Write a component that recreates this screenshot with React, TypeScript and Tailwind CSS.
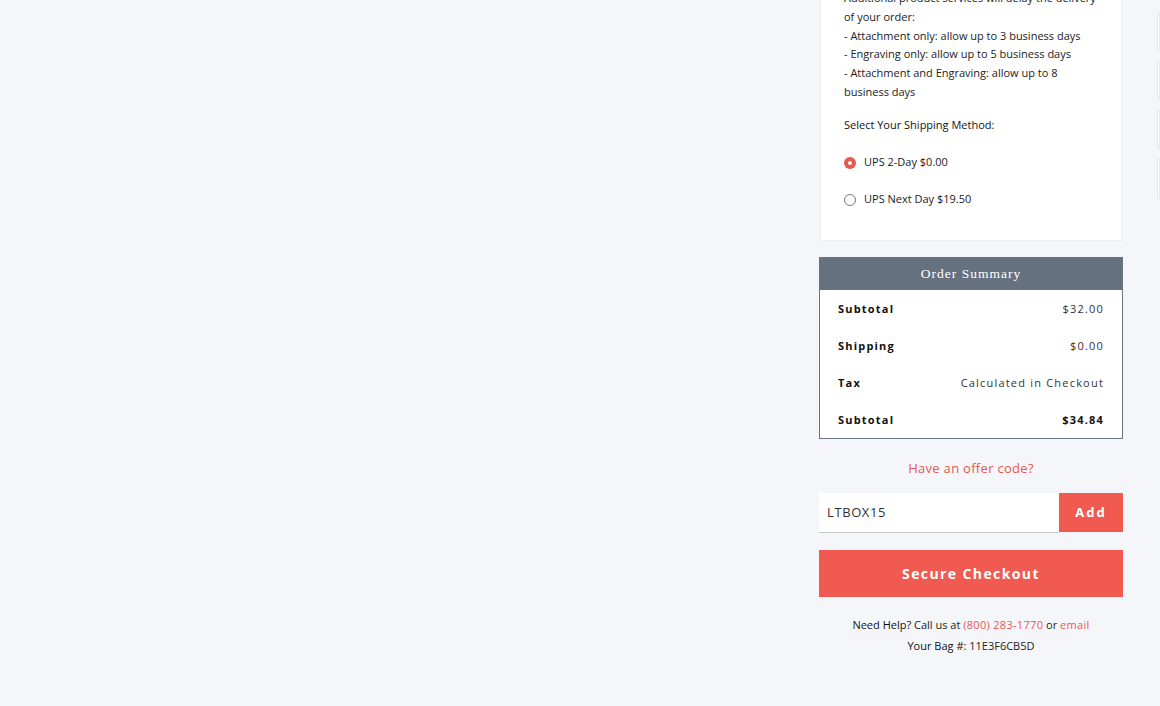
import React from "react";

const sans = { fontFamily: "'Open Sans', Lato, sans-serif" };

export default function App() {
  return (
    <div className="w-[1160px] h-[706px] overflow-hidden bg-[#f5f6fa] flex" style={sans}>
      <div className="w-[819px] shrink-0" />
      <div className="w-[304px] shrink-0 flex flex-col">
        <div className="mt-[-30px] ml-[1px] mr-[1px] bg-white border border-[#eceef3] pl-[23px] pr-[24px] pt-[18px] pb-[34px] text-[11px] leading-[18.75px] text-[#222]">
          <p>Additional product services will delay the delivery of your order:</p>
          <p>- Attachment only: allow up to 3 business days</p>
          <p>- Engraving only: allow up to 5 business days</p>
          <p>- Attachment and Engraving: allow up to 8 business days</p>
          <p className="mt-[14px] text-[11px] text-[#111]">Select Your Shipping Method:</p>
          <div className="mt-[22px] flex flex-col gap-[24px]">
            <label className="flex items-center gap-[8px] h-[13px]">
              <span className="w-[12px] h-[12px] rounded-full bg-[#e8594f] flex items-center justify-center">
                <span className="w-[4px] h-[4px] rounded-full bg-white" />
              </span>
              <span>UPS 2-Day $0.00</span>
            </label>
            <label className="flex items-center gap-[8px] h-[13px]">
              <span className="w-[12px] h-[12px] rounded-full border border-[#777] bg-white" />
              <span>UPS Next Day $19.50</span>
            </label>
          </div>
        </div>

        <div className="mt-[16px] border border-[#6b7380] bg-white">
          <div className="h-[32px] bg-[#667180] flex items-center justify-center text-white text-[13.5px] tracking-[1px]" style={{ fontFamily: "'Liberation Serif', 'DejaVu Serif', serif", fontWeight: 400 }}>
            Order Summary
          </div>
          <div className="px-[18px] text-[11px] text-[#111]">
            {[
              ["Subtotal", "$32.00", false],
              ["Shipping", "$0.00", false],
              ["Tax", "Calculated in Checkout", false],
              ["Subtotal", "$34.84", true],
            ].map(([l, v, b], i) => (
              <div key={i} className="h-[37px] flex items-center justify-between">
                <span className="font-bold tracking-[1.2px]">{l as string}</span>
                <span className={`tracking-[1.2px] ${b ? "font-bold" : "text-[#333]"}`}>{v as string}</span>
              </div>
            ))}
          </div>
        </div>

        <div className="mt-[20px] text-center text-[13px] tracking-[0.3px] text-[#e8594f]">Have an offer code?</div>

        <div className="mt-[14px] flex h-[40px]">
          <div className="flex-1 bg-white border-b border-[#c8c8c8] flex items-center px-[8px] text-[13px] tracking-[0.6px] text-[#333]">
            LTBOX15
          </div>
          <button className="w-[64px] h-[39px] bg-[#f05a50] text-white text-[13px] font-bold tracking-[2px]">Add</button>
        </div>

        <button className="mt-[17px] h-[47px] bg-[#f05a50] text-white text-[14px] font-bold tracking-[1.4px]">
          Secure Checkout
        </button>

        <div className="mt-[17px] text-center text-[11px] text-[#222] leading-[21px]">
          <div>
            <span className="text-[#111]">Need Help?</span> Call us at{" "}
            <span className="text-[#e8594f] tracking-[0.3px]">(800) 283-1770</span> or{" "}
            <span className="text-[#e8594f] tracking-[0.3px]">email</span>
          </div>
          <div>
            <span className="text-[#111]">Your Bag #:</span> 11E3F6CB5D
          </div>
        </div>
      </div>
      <div className="ml-[34px] flex-1 flex flex-col pt-[12px] gap-[10px]">
        <div className="h-[39px] bg-white border border-[#e6e8ee]" />
        <div className="h-[39px] bg-white border border-[#e6e8ee]" />
        <div className="h-[39px] bg-white border border-[#e6e8ee]" />
        <div className="h-[40px] bg-white border border-[#e6e8ee]" />
      </div>
    </div>
  );
}
